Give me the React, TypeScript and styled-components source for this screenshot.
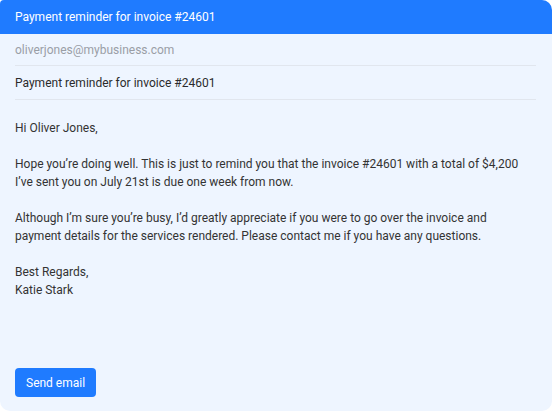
import styled, { createGlobalStyle } from 'styled-components';

const GlobalStyle = createGlobalStyle`
	html, body {
		margin: 0;
		padding: 0;
		background: #ffffff;
	}
	* {
		box-sizing: border-box;
	}
`;

function App() {
	return (
		<>
			<GlobalStyle />
			<Card>
				<Header>Payment reminder for invoice #24601</Header>
				<Field $muted>oliverjones@mybusiness.com</Field>
				<Field $tall>Payment reminder for invoice #24601</Field>
				<Body>
					<p>Hi Oliver Jones,</p>
					<p>
						Hope you’re doing well. This is just to remind you that the invoice #24601 with a total of $4,200
						<br />
						I’ve sent you on July 21st is due one week from now.
					</p>
					<p>
						Although I’m sure you’re busy, I’d greatly appreciate if you were to go over the invoice and
						<br />
						payment details for the services rendered. Please contact me if you have any questions.
					</p>
					<p>
						Best Regards,
						<br />
						Katie Stark
					</p>
				</Body>
				<Footer>
					<SendButton>Send email</SendButton>
				</Footer>
			</Card>
		</>
	);
}

export default App;

const Card = styled.div`
	width: 552px;
	height: 411px;
	display: flex;
	flex-direction: column;
	background: #eef5ff;
	border-radius: 4px 10px 10px 10px;
	overflow: hidden;
	font-family: Roboto, 'Liberation Sans', sans-serif;
	font-size: 12px;
	color: #333;
`;

const Header = styled.div`
	height: 34px;
	display: flex;
	align-items: center;
	padding: 0 15px;
	background: #1f7bff;
	color: #fff;
	font-size: 12px;
`;

const Field = styled.div<{ $muted?: boolean; $tall?: boolean }>`
	height: ${(p) => (p.$tall ? '34px' : '32px')};
	display: flex;
	align-items: center;
	margin: 0 16px 0 15px;
	border-bottom: 1px solid #e1e6ee;
	color: ${(p) => (p.$muted ? '#9a9ea6' : '#2b2b2b')};
	font-size: 12px;
	padding-top: 1px;
`;

const Body = styled.div`
	flex: 1;
	padding: 19px 16px 0 15px;
	line-height: 18px;

	p {
		margin: 0 0 18px;
	}
`;

const Footer = styled.div`
	padding: 0 15px 14px;
`;

const SendButton = styled.button`
	height: 29px;
	padding: 0 11px;
	border: none;
	border-radius: 4px;
	background: #1f7bff;
	color: #fff;
	font-family: Roboto, 'Liberation Sans', sans-serif;
	font-size: 12px;
	cursor: pointer;
`;
